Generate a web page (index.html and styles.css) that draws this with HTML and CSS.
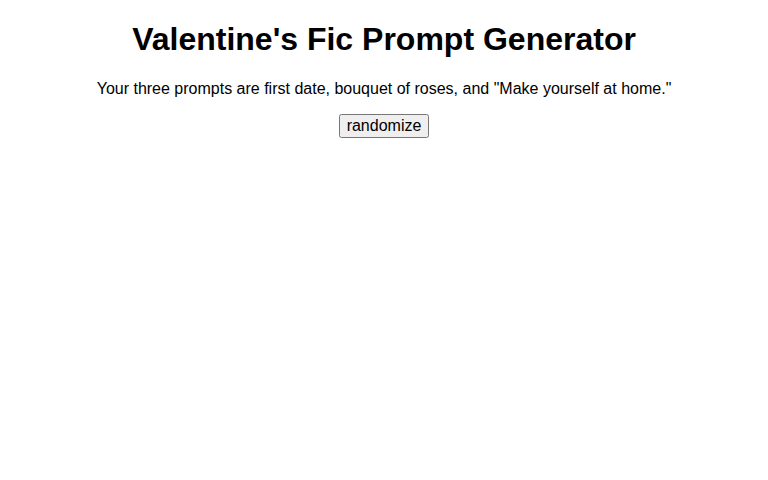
FILE: index.html
```html
<!DOCTYPE html>
<html>
<head>
<meta charset="utf-8">
<link rel="stylesheet" href="styles.css">
</head>
<body>
<div class="page">
<h1 class="title">Valentine's Fic Prompt Generator</h1>
<p class="prompts">Your three prompts are first date, bouquet of roses, and "Make yourself at home."</p>
<button class="btn">randomize</button>
</div>
</body>
</html>
```
FILE: styles.css
```css
body {
  margin: 0;
  font-family: "Liberation Sans", Arial, sans-serif;
  color: #000;
  background: #fff;
}
.page {
  text-align: center;
}
.btn {
  font-family: "Liberation Sans", Arial, sans-serif;
  font-size: 16px;
}
```
